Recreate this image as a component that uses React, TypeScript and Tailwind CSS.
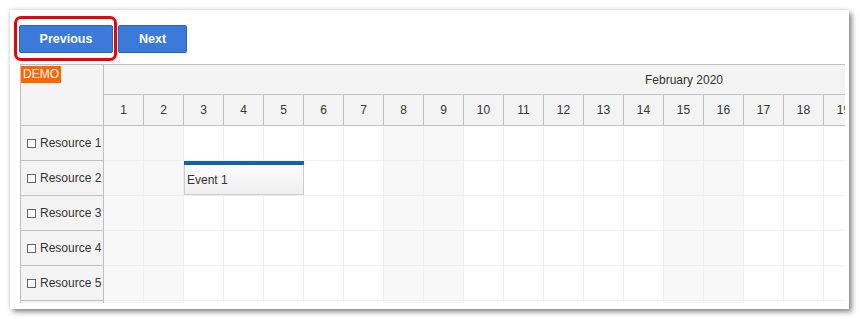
import React from "react";

const days = Array.from({ length: 29 }, (_, i) => i + 1);
const weekend = new Set([1, 2, 8, 9, 15, 16, 22, 23, 29]);
const resources = Array.from({ length: 6 }, (_, i) => `Resource ${i + 1}`);

export default function App() {
  return (
    <div
      className="w-[860px] h-[319px] bg-white pt-[10px] pl-[10px]"
      style={{ fontFamily: '"Liberation Sans", Arial, sans-serif' }}
    >
      <div className="relative w-[839px] h-[299px] bg-white shadow-[3px_3px_5px_rgba(0,0,0,0.45),-1px_-1px_4px_rgba(0,0,0,0.12)] overflow-hidden">
        {/* toolbar */}
        <div className="flex gap-[5px] pl-[9px] pt-[15px]">
          <button className="w-[94px] h-[28px] bg-[#3c7ad9] border border-[#2d63bd] rounded-[2px] text-white font-bold text-[12.5px]">
            Previous
          </button>
          <button className="w-[69px] h-[28px] bg-[#3c7ad9] border border-[#2d63bd] rounded-[2px] text-white font-bold text-[12.5px]">
            Next
          </button>
        </div>
        {/* red highlight annotation */}
        <div className="absolute left-[4px] top-[6px] w-[103px] h-[45px] border-[3px] border-[#e8000b] rounded-[7px]" />

        {/* scheduler */}
        <div className="mt-[11px] ml-[10px] w-[825px] h-[239px] overflow-hidden border-l border-t border-[#c0c0c0] flex text-[12px] text-[#333]">
          {/* row headers */}
          <div className="w-[83px] shrink-0 border-r border-[#c0c0c0] bg-[#f3f3f3]">
            <div className="h-[61px] border-b border-[#c0c0c0]">
              <span className="inline-block bg-[#ff6600] text-white text-[12px] leading-[17px] px-[2px]">DEMO</span>
            </div>
            {resources.map((r) => (
              <div key={r} className="h-[35px] border-b border-[#c0c0c0] flex items-center pl-[6px] gap-[4px] whitespace-nowrap">
                <span className="inline-block w-[9px] h-[9px] border border-[#666] bg-white" />
                <span>{r}</span>
              </div>
            ))}
          </div>
          {/* time area */}
          <div className="flex-1 overflow-hidden">
            <div className="w-[1160px]">
              <div className="h-[30px] border-b border-[#c0c0c0] bg-[#f3f3f3] flex items-center justify-center">
                February 2020
              </div>
              <div className="h-[31px] border-b border-[#c0c0c0] bg-[#f3f3f3] flex">
                {days.map((d) => (
                  <div key={d} className="w-[40px] shrink-0 border-r border-[#c0c0c0] flex items-center justify-center">
                    {d}
                  </div>
                ))}
              </div>
              {resources.map((r, ri) => (
                <div key={r} className="relative h-[35px] border-b border-[#eeeeee] flex">
                  {days.map((d) => (
                    <div
                      key={d}
                      className={`w-[40px] shrink-0 border-r border-[#eeeeee] ${weekend.has(d) ? "bg-[#f8f8f8]" : "bg-white"}`}
                    />
                  ))}
                  {ri === 1 && (
                    <div className="absolute left-[80px] top-0 w-[120px] h-[34px] border border-[#cccccc] border-t-0 bg-gradient-to-b from-white to-[#eeeeee]">
                      <div className="h-[4px] bg-[#1464a5] -mx-px" />
                      <div className="pl-[2px] h-[29px] flex items-center text-[#333]">Event 1</div>
                    </div>
                  )}
                </div>
              ))}
            </div>
          </div>
        </div>
      </div>
    </div>
  );
}
